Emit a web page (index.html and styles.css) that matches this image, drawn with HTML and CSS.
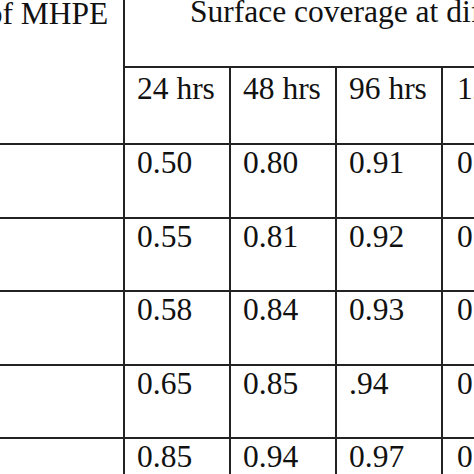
FILE: index.html
```html
<!DOCTYPE html>
<html lang="en">
<head>
    <meta charset="UTF-8">
    <meta name="viewport" content="width=device-width, initial-scale=1.0">
    <title>Surface coverage of MHPE</title>
    <link rel="stylesheet" href="styles.css">
</head>
<body>
    <div class="page">
        <table class="coverage-table">
            <colgroup>
                <col class="col-conc">
                <col class="col-time">
                <col class="col-time">
                <col class="col-time">
                <col class="col-time">
                <col class="col-time">
            </colgroup>
            <thead>
                <tr class="head-row">
                    <th class="conc-head" rowspan="2">Concentration of MHPE</th>
                    <th class="span-head" colspan="5">Surface coverage at different time intervals</th>
                </tr>
                <tr class="sub-row">
                    <th>24 hrs</th>
                    <th>48 hrs</th>
                    <th>96 hrs</th>
                    <th class="late">120 hrs</th>
                    <th>144 hrs</th>
                </tr>
            </thead>
            <tbody>
                <tr>
                    <td></td>
                    <td>0.50</td>
                    <td>0.80</td>
                    <td>0.91</td>
                    <td class="late">0.93</td>
                    <td>0.95</td>
                </tr>
                <tr>
                    <td></td>
                    <td>0.55</td>
                    <td>0.81</td>
                    <td>0.92</td>
                    <td class="late">0.94</td>
                    <td>0.96</td>
                </tr>
                <tr>
                    <td></td>
                    <td>0.58</td>
                    <td>0.84</td>
                    <td>0.93</td>
                    <td class="late">0.95</td>
                    <td>0.96</td>
                </tr>
                <tr>
                    <td></td>
                    <td>0.65</td>
                    <td>0.85</td>
                    <td>.94</td>
                    <td class="late">0.96</td>
                    <td>0.97</td>
                </tr>
                <tr>
                    <td></td>
                    <td>0.85</td>
                    <td>0.94</td>
                    <td>0.97</td>
                    <td class="late">0.98</td>
                    <td>0.99</td>
                </tr>
            </tbody>
        </table>
    </div>
</body>
</html>
```

FILE: styles.css
```css
/* Basic Reset */
* {
    margin: 0;
    padding: 0;
    box-sizing: border-box;
}

body {
    font-family: 'Liberation Serif', 'Times New Roman', serif;
    background-color: #FFFFFF;
    color: #111;
    overflow: hidden;
}

.page {
    width: 474px;
    height: 474px;
    overflow: hidden;
}

.coverage-table {
    border-collapse: collapse;
    table-layout: fixed;
    width: 682px;
    margin-top: -50px;
    margin-left: -28px;
    font-size: 31.5px;
    line-height: 1.15;
}

.col-conc {
    width: 152px;
}

.col-time {
    width: 106px;
}

.coverage-table th,
.coverage-table td {
    border: 2px solid #222; /* Dark grid lines */
    font-weight: normal;
    text-align: left;
    vertical-align: top;
    padding: 0 12px 0 12px;
    white-space: nowrap;
}

.head-row {
    height: 116px;
}

.conc-head {
    white-space: normal !important;
    text-align: center !important;
    padding-top: 8px !important;
    border-left: none !important;
}

.span-head {
    padding-top: 42px !important;
    padding-left: 65px !important;
}

.sub-row {
    height: 77px;
}

.sub-row th {
    padding-top: 3px;
}

.coverage-table .late {
    padding-left: 14px;
}

.coverage-table tbody tr {
    height: 73.5px;
}

.coverage-table tbody td:first-child {
    border-left: none;
}
```
